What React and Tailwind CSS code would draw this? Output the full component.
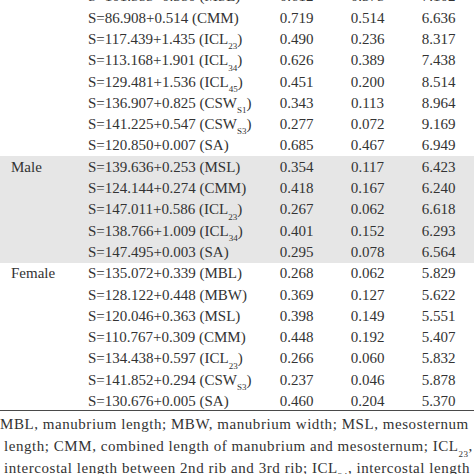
import React from "react";

const serif = { fontFamily: '"Liberation Serif", "DejaVu Serif", serif' };

const Sub = ({ children }) => (
  <sub className="text-[9px] leading-none align-[-3px]">{children}</sub>
);

const rows = [
  { sex: "", f: "S=101.585+0.380", v: "MSL", a: "0.612", b: "0.375", c: "7.102" },
  { sex: "", f: "S=86.908+0.514", v: "CMM", a: "0.719", b: "0.514", c: "6.636" },
  { sex: "", f: "S=117.439+1.435", v: "ICL", s: "23", a: "0.490", b: "0.236", c: "8.317" },
  { sex: "", f: "S=113.168+1.901", v: "ICL", s: "34", a: "0.626", b: "0.389", c: "7.438" },
  { sex: "", f: "S=129.481+1.536", v: "ICL", s: "45", a: "0.451", b: "0.200", c: "8.514" },
  { sex: "", f: "S=136.907+0.825", v: "CSW", s: "S1", a: "0.343", b: "0.113", c: "8.964" },
  { sex: "", f: "S=141.225+0.547", v: "CSW", s: "S3", a: "0.277", b: "0.072", c: "9.169" },
  { sex: "", f: "S=120.850+0.007", v: "SA", a: "0.685", b: "0.467", c: "6.949" },
  { sex: "Male", f: "S=139.636+0.253", v: "MSL", a: "0.354", b: "0.117", c: "6.423", g: true },
  { sex: "", f: "S=124.144+0.274", v: "CMM", a: "0.418", b: "0.167", c: "6.240", g: true },
  { sex: "", f: "S=147.011+0.586", v: "ICL", s: "23", a: "0.267", b: "0.062", c: "6.618", g: true },
  { sex: "", f: "S=138.766+1.009", v: "ICL", s: "34", a: "0.401", b: "0.152", c: "6.293", g: true },
  { sex: "", f: "S=147.495+0.003", v: "SA", a: "0.295", b: "0.078", c: "6.564", g: true },
  { sex: "Female", f: "S=135.072+0.339", v: "MBL", a: "0.268", b: "0.062", c: "5.829" },
  { sex: "", f: "S=128.122+0.448", v: "MBW", a: "0.369", b: "0.127", c: "5.622" },
  { sex: "", f: "S=120.046+0.363", v: "MSL", a: "0.398", b: "0.149", c: "5.551" },
  { sex: "", f: "S=110.767+0.309", v: "CMM", a: "0.448", b: "0.192", c: "5.407" },
  { sex: "", f: "S=134.438+0.597", v: "ICL", s: "23", a: "0.266", b: "0.060", c: "5.832" },
  { sex: "", f: "S=141.852+0.294", v: "CSW", s: "S3", a: "0.237", b: "0.046", c: "5.878" },
  { sex: "", f: "S=130.676+0.005", v: "SA", a: "0.460", b: "0.204", c: "5.370" },
];

export default function App() {
  return (
    <div className="w-[474px] h-[474px] overflow-hidden bg-white text-[#333]" style={serif}>
      <div className="mt-[-14px]">
        {rows.map((r, i) => (
          <div
            key={i}
            className={`flex items-center h-[21.3px] text-[15px] whitespace-nowrap ${r.g ? "bg-[#e6e6e6]" : ""}`}
          >
            <div className="w-[88px] pl-[11px]">{r.sex}</div>
            <div className="w-[173px]">
              {r.f} ({r.v}
              {r.s && <Sub>{r.s}</Sub>})
            </div>
            <div className="w-[71px] text-center">{r.a}</div>
            <div className="w-[71px] text-center">{r.b}</div>
            <div className="w-[71px] text-center">{r.c}</div>
          </div>
        ))}
        <div className="h-[1.5px] mt-[-2px] bg-[#4a4a4a]" />
      </div>

      {/* footnote */}
      <div className="pt-[2px] text-[15px] leading-[22px] tracking-[0.55px] whitespace-nowrap">
        <div>MBL, manubrium length; MBW, manubrium width; MSL, mesosternum</div>
        <div className="pl-[4px]">
          length; CMM, combined length of manubrium and mesosternum; ICL<Sub>23</Sub>,
        </div>
        <div className="pl-[4px]">
          intercostal length between 2nd rib and 3rd rib; ICL<Sub>34</Sub>, intercostal length
        </div>
      </div>
    </div>
  );
}
